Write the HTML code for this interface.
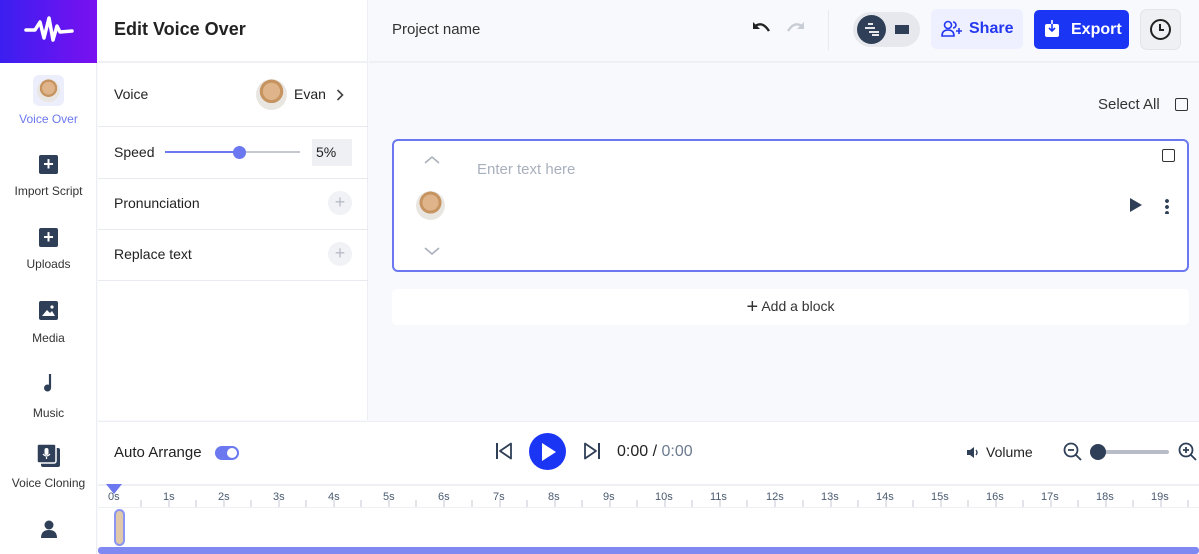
<!DOCTYPE html>
<html><head><style>
*{box-sizing:border-box;margin:0;padding:0}
body{width:1199px;height:554px;overflow:hidden;font-family:"Liberation Sans",sans-serif;background:#f8f9fc;position:relative;color:#222}
.abs{position:absolute}
.nav{left:0;top:0;width:97px;height:554px;background:#fff;border-right:1px solid #eceef3}
.logo{left:0;top:0;width:97px;height:63px;background:linear-gradient(90deg,#3b1ff0,#7a10f0)}
.ni{position:absolute;left:0;width:97px;text-align:center;font-size:12px;color:#333}
.ico{width:19px;height:19px;background:#2e3f57;border-radius:2px;margin:0 auto 8px;color:#fff;font-size:18px;line-height:19px;font-weight:bold}
.panel{left:98px;top:0;width:270px;height:420px;background:#fff;border-right:1px solid #eceef3}
.row{position:absolute;left:0;width:270px;border-bottom:1px solid #e8eaef;font-size:14px;padding-left:16px}
.plus{position:absolute;right:16px;width:24px;height:24px;border-radius:12px;background:#f1f2f5;color:#b8bcc6;text-align:center;line-height:23px;font-size:18px}
.face{border-radius:50%;background:radial-gradient(circle at 50% 40%,#e0b48a 0 35%,#c69460 36% 48%,#e9e6e2 49%)}
</style></head><body>
<div class="abs nav"></div>
<div class="abs logo"><svg width="97" height="63"><path d="M26 30 L35 30 L40 22 L44 38 L49 18 L53 40 L57 26 L60 32 L72 31" stroke="#fff" stroke-width="3.5" fill="none" stroke-linecap="round" stroke-linejoin="round"/></svg></div>
<div class="ni" style="top:75px"><div style="width:31px;height:31px;background:#eceefc;border-radius:6px;margin:0 auto 6px;padding:4px"><div class="face" style="width:23px;height:23px"></div></div><span style="color:#6b78f0;font-size:12px">Voice Over</span></div>
<div class="ni" style="top:155px"><div class="ico">+</div><div style="margin-top:10px">Import Script</div></div>
<div class="ni" style="top:228px"><div class="ico">+</div><div style="margin-top:10px">Uploads</div></div>
<div class="ni" style="top:301px"><svg width="19" height="19" style="display:block;margin:0 auto 11px"><rect width="19" height="19" rx="2" fill="#2e3f57"/><path d="M3 15 L8 9 L11 12 L13 10 L16 15Z" fill="#fff"/><circle cx="13" cy="6" r="1.6" fill="#fff"/></svg>Media</div>
<div class="ni" style="top:372px"><svg width="14" height="22" style="display:block;margin:0 auto 12px"><path d="M8 2 V16" stroke="#2e3f57" stroke-width="2.2"/><circle cx="5.5" cy="16" r="3.5" fill="#2e3f57"/></svg>Music</div>
<div class="ni" style="top:444px"><svg width="24" height="24" style="display:block;margin:0 auto 8px"><rect x="4" y="4" width="19" height="19" rx="2" fill="#2e3f57"/><rect x="0" y="0" width="19" height="19" rx="2" fill="#2e3f57" stroke="#fff" stroke-width="1.5"/><rect x="7.5" y="4" width="4" height="7" rx="2" fill="#fff"/><path d="M6 10 Q9.5 14 13 10 M9.5 13 V15" stroke="#fff" stroke-width="1.2" fill="none"/></svg>Voice Cloning</div>
<div class="ni" style="top:520px"><svg width="18" height="18" style="display:block;margin:0 auto"><circle cx="9" cy="5" r="4.5" fill="#2e3f57"/><path d="M1 18 Q1 10 9 10 Q17 10 17 18Z" fill="#2e3f57"/></svg></div>

<div class="abs panel">
<div class="row" style="top:0;height:63px;font-size:18px;font-weight:bold;line-height:58px;border-bottom:2px solid #eef0f4">Edit Voice Over</div>
<div class="row" style="top:63px;height:64px;line-height:63px">Voice
 <div class="face abs" style="left:158px;top:16px;width:31px;height:31px"></div>
 <span class="abs" style="left:196px;top:0">Evan</span><svg class="abs" style="left:238px;top:26px" width="8" height="12"><path d="M1.5 1 L6.5 6 L1.5 11" stroke="#444" stroke-width="1.6" fill="none"/></svg></div>
<div class="row" style="top:127px;height:52px;line-height:50px">Speed
 <div class="abs" style="left:67px;top:24px;width:74px;height:2px;background:#6b78f0"></div>
 <div class="abs" style="left:141px;top:24px;width:61px;height:2px;background:#c4c7cf"></div>
 <div class="abs" style="left:135px;top:19px;width:13px;height:13px;border-radius:50%;background:#6b78f0"></div>
 <div class="abs" style="left:214px;top:12px;width:40px;height:27px;background:#eef0f4;line-height:27px;padding-left:4px">5%</div></div>
<div class="row" style="top:179px;height:51px;line-height:48px">Pronunciation<div class="plus" style="top:12px">+</div></div>
<div class="row" style="top:230px;height:51px;line-height:48px">Replace text<div class="plus" style="top:12px">+</div></div>
</div>

<div class="abs" style="left:369px;top:0;width:830px;height:63px;background:#f8f9fc;border-bottom:2px solid #eef0f4"></div>
<div class="abs" style="left:392px;top:21px;font-size:15px;color:#333">Project name</div>
<svg class="abs" style="left:752px;top:21px" width="20" height="14"><path d="M2 6 Q10 -1 17 10" stroke="#222" stroke-width="2.4" fill="none"/><path d="M1 1 V8 H8Z" fill="#222"/></svg>
<svg class="abs" style="left:785px;top:21px" width="20" height="14"><path d="M18 6 Q10 -1 3 10" stroke="#c8ccd4" stroke-width="2.4" fill="none"/><path d="M19 1 V8 H12Z" fill="#c8ccd4"/></svg>
<div class="abs" style="left:828px;top:10px;width:1px;height:40px;background:#e8eaef"></div>
<div class="abs" style="left:853px;top:12px;width:67px;height:35px;border-radius:18px;background:#e6e8ed"></div>
<div class="abs" style="left:857px;top:15px;width:29px;height:29px;border-radius:50%;background:#2e3f57"></div>
<svg class="abs" style="left:863px;top:22px" width="18" height="15"><path d="M5 2 H10 M2 6 H12 M6 10 H16 M9 13 H16" stroke="#fff" stroke-width="1.8"/></svg>
<div class="abs" style="left:895px;top:25px;width:14px;height:9px;background:#2e3f57"></div>
<div class="abs" style="left:931px;top:9px;width:92px;height:40px;border-radius:6px;background:#eeefff;color:#2438f0;font-weight:bold;font-size:16px;line-height:40px;padding-left:38px">Share</div>
<svg class="abs" style="left:941px;top:20px" width="22" height="18"><circle cx="7" cy="5" r="3.5" stroke="#2438f0" stroke-width="1.6" fill="none"/><path d="M1 16 Q1 10 7 10 Q13 10 13 16Z" stroke="#2438f0" stroke-width="1.6" fill="none"/><path d="M12 2 A3 3 0 0 1 12 8" stroke="#2438f0" stroke-width="1.6" fill="none"/><path d="M18 8 V14 M15 11 H21" stroke="#2438f0" stroke-width="1.6"/></svg>
<div class="abs" style="left:1034px;top:10px;width:95px;height:39px;border-radius:5px;background:#1b35f5;color:#fff;font-weight:bold;font-size:16px;line-height:39px;padding-left:37px">Export</div>
<svg class="abs" style="left:1045px;top:20px" width="15" height="18"><rect x="0" y="4" width="14" height="13" rx="2" fill="#fff"/><path d="M7 1 V11 M4 8 L7 11 L10 8" stroke="#1b35f5" stroke-width="1.6" fill="none"/><path d="M7 0 V4" stroke="#fff" stroke-width="1.6"/></svg>
<div class="abs" style="left:1140px;top:9px;width:41px;height:41px;border-radius:7px;background:#eef0f4;border:1px solid #e2e4ea"></div>
<div class="abs" style="left:1150px;top:19px;width:21px;height:21px;border-radius:50%;border:2px solid #222"></div>
<div class="abs" style="left:1159px;top:24px;width:5px;height:7px;border-left:2px solid #222;border-bottom:2px solid #222"></div>

<div class="abs" style="left:1098px;top:96px;font-size:15px;color:#333">Select All</div>
<div class="abs" style="left:1175px;top:98px;width:13px;height:13px;border:1.5px solid #333;border-radius:2px"></div>

<div class="abs" style="left:392px;top:139px;width:797px;height:133px;background:#fff;border:2px solid #6b78f0;border-radius:6px"></div>
<svg class="abs" style="left:424px;top:155px" width="16" height="10"><path d="M1 8 L8 2 L15 8" stroke="#aab0bc" stroke-width="1.6" fill="none"/></svg>
<svg class="abs" style="left:424px;top:246px" width="16" height="10"><path d="M1 2 L8 8 L15 2" stroke="#aab0bc" stroke-width="1.6" fill="none"/></svg>
<div class="face abs" style="left:416px;top:191px;width:29px;height:29px"></div>
<div class="abs" style="left:477px;top:161px;font-size:15px;color:#a9b0bd">Enter text here</div>
<div class="abs" style="left:1162px;top:149px;width:13px;height:13px;border:1.5px solid #333;border-radius:2px"></div>
<div class="abs" style="left:1130px;top:198px;width:0;height:0;border-left:12px solid #2e3f57;border-top:7px solid transparent;border-bottom:7px solid transparent"></div>
<div class="abs" style="left:1165px;top:198px;width:4px;height:16px;background:radial-gradient(circle,#2e3f57 1.8px,transparent 2px) 0 0/4px 6px"></div>
<div class="abs" style="left:392px;top:289px;width:797px;height:36px;background:#fff;border-radius:5px;text-align:center;line-height:34px;font-size:14px;color:#333"><span style="font-size:20px;vertical-align:-2px">+</span> Add a block</div>

<div class="abs" style="left:98px;top:421px;width:1101px;height:133px;background:#fff;border-top:1px solid #eceef3"></div>
<div class="abs" style="left:114px;top:444px;font-size:15px;color:#222">Auto Arrange</div>
<div class="abs" style="left:215px;top:446px;width:24px;height:14px;border-radius:7px;background:#6b78f0"></div>
<div class="abs" style="left:227px;top:448px;width:10px;height:10px;border-radius:50%;background:#fff"></div>
<svg class="abs" style="left:495px;top:442px" width="18" height="18"><path d="M2 1 V17" stroke="#2e3f57" stroke-width="2"/><path d="M16 1.5 L5 9 L16 16.5Z" stroke="#2e3f57" stroke-width="1.8" fill="none" stroke-linejoin="round"/></svg>
<div class="abs" style="left:529px;top:433px;width:37px;height:37px;border-radius:50%;background:#1b35f5"></div>
<div class="abs" style="left:542px;top:443px;width:0;height:0;border-left:14px solid #fff;border-top:9px solid transparent;border-bottom:9px solid transparent"></div>
<svg class="abs" style="left:583px;top:442px" width="18" height="18"><path d="M16 1 V17" stroke="#2e3f57" stroke-width="2"/><path d="M2 1.5 L13 9 L2 16.5Z" stroke="#2e3f57" stroke-width="1.8" fill="none" stroke-linejoin="round"/></svg>
<div class="abs" style="left:617px;top:443px;font-size:16px;color:#222">0:00 / <span style="color:#6b7a90">0:00</span></div>
<svg class="abs" style="left:966px;top:446px" width="16" height="13"><path d="M1 4 H4 L8 1 V12 L4 9 H1Z" fill="#2e3f57"/><path d="M10 4 Q12 6.5 10 9" stroke="#2e3f57" stroke-width="1.4" fill="none"/></svg>
<div class="abs" style="left:986px;top:444px;font-size:14px;color:#222">Volume</div>
<svg class="abs" style="left:1063px;top:442px" width="20" height="20"><circle cx="8" cy="8" r="6.5" stroke="#2e3f57" stroke-width="1.8" fill="none"/><path d="M5 8 H11 M13 13 L18 18" stroke="#2e3f57" stroke-width="1.8"/></svg>
<div class="abs" style="left:1090px;top:450px;width:79px;height:4px;background:#b8bcc6;border-radius:2px"></div>
<div class="abs" style="left:1090px;top:444px;width:16px;height:16px;border-radius:50%;background:#2e3f57"></div>
<svg class="abs" style="left:1178px;top:442px" width="20" height="20"><circle cx="8" cy="8" r="6.5" stroke="#2e3f57" stroke-width="1.8" fill="none"/><path d="M5 8 H11 M8 5 V11 M13 13 L18 18" stroke="#2e3f57" stroke-width="1.8"/></svg>

<div class="abs" style="left:98px;top:484px;width:1101px;height:2px;background:#eef0f4"></div>
<div class="abs" style="left:98px;top:507px;width:1101px;height:1px;background:#eef0f4"></div>
<div class="abs" style="left:106px;top:484px;width:0;height:0;border-top:10px solid #6b78f0;border-left:8px solid transparent;border-right:8px solid transparent"></div>
<div class="abs" style="left:98px;top:488px;width:1101px;height:20px">
<svg width="1101" height="20" font-family="Liberation Sans" font-size="11" fill="#4a5a70">
<g stroke="#c4cad4" stroke-width="1">
<line x1="43" y1="12" x2="43" y2="19"/><line x1="98" y1="12" x2="98" y2="19"/><line x1="153" y1="12" x2="153" y2="19"/><line x1="208" y1="12" x2="208" y2="19"/><line x1="263" y1="12" x2="263" y2="19"/><line x1="318" y1="12" x2="318" y2="19"/><line x1="374" y1="12" x2="374" y2="19"/><line x1="429" y1="12" x2="429" y2="19"/><line x1="484" y1="12" x2="484" y2="19"/><line x1="539" y1="12" x2="539" y2="19"/><line x1="594" y1="12" x2="594" y2="19"/><line x1="649" y1="12" x2="649" y2="19"/><line x1="705" y1="12" x2="705" y2="19"/><line x1="760" y1="12" x2="760" y2="19"/><line x1="815" y1="12" x2="815" y2="19"/><line x1="870" y1="12" x2="870" y2="19"/><line x1="925" y1="12" x2="925" y2="19"/><line x1="980" y1="12" x2="980" y2="19"/><line x1="1035" y1="12" x2="1035" y2="19"/><line x1="1090" y1="12" x2="1090" y2="19"/>
<line x1="71" y1="12" x2="71" y2="19"/><line x1="126" y1="12" x2="126" y2="19"/><line x1="181" y1="12" x2="181" y2="19"/><line x1="236" y1="12" x2="236" y2="19"/><line x1="291" y1="12" x2="291" y2="19"/><line x1="346" y1="12" x2="346" y2="19"/><line x1="402" y1="12" x2="402" y2="19"/><line x1="457" y1="12" x2="457" y2="19"/><line x1="512" y1="12" x2="512" y2="19"/><line x1="567" y1="12" x2="567" y2="19"/><line x1="622" y1="12" x2="622" y2="19"/><line x1="677" y1="12" x2="677" y2="19"/><line x1="733" y1="12" x2="733" y2="19"/><line x1="788" y1="12" x2="788" y2="19"/><line x1="843" y1="12" x2="843" y2="19"/><line x1="898" y1="12" x2="898" y2="19"/><line x1="953" y1="12" x2="953" y2="19"/><line x1="1008" y1="12" x2="1008" y2="19"/><line x1="1063" y1="12" x2="1063" y2="19"/>
</g>
<text x="10" y="12">0s</text><text x="65" y="12">1s</text><text x="120" y="12">2s</text><text x="175" y="12">3s</text><text x="230" y="12">4s</text><text x="285" y="12">5s</text><text x="340" y="12">6s</text><text x="395" y="12">7s</text><text x="450" y="12">8s</text><text x="505" y="12">9s</text><text x="557" y="12">10s</text><text x="612" y="12">11s</text><text x="668" y="12">12s</text><text x="723" y="12">13s</text><text x="778" y="12">14s</text><text x="833" y="12">15s</text><text x="888" y="12">16s</text><text x="943" y="12">17s</text><text x="998" y="12">18s</text><text x="1053" y="12">19s</text>
</svg></div>
<div class="abs" style="left:114px;top:509px;width:11px;height:37px;border:2px solid #8a94f2;border-radius:6px;background:#e0c8a8"></div>
<div class="abs" style="left:98px;top:547px;width:1101px;height:7px;background:#8088f2;border-radius:3px"></div>
</body></html>
